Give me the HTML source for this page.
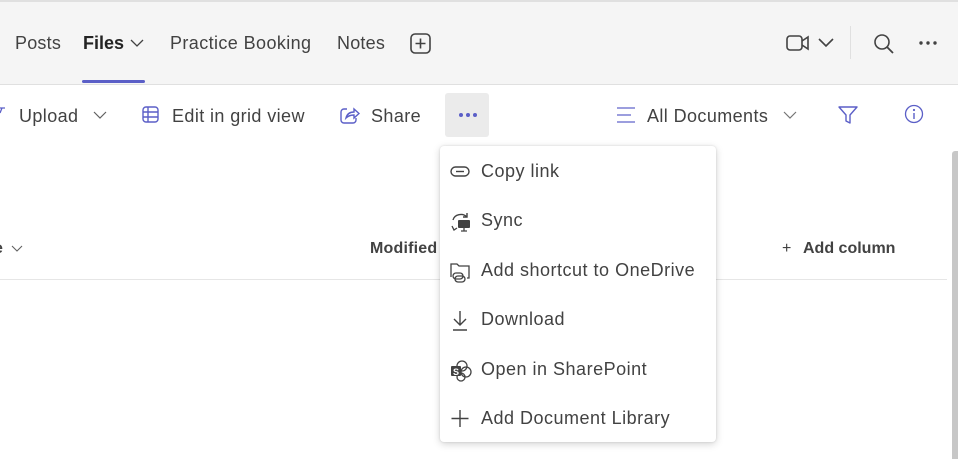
<!DOCTYPE html>
<html><head><meta charset="utf-8"><style>
*{margin:0;padding:0;box-sizing:border-box}
body{width:958px;height:459px;overflow:hidden;background:#fff;font-family:"Liberation Sans",sans-serif;color:#242424;position:relative}
.hdr{position:absolute;left:0;top:0;width:958px;height:85px;background:#f5f5f5;border-top:2px solid #e0e0e0;border-bottom:1px solid #e0e0e0}
.t{position:absolute;white-space:nowrap}
.tab{top:33px;font-size:18px;color:#424242;letter-spacing:.2px}
.tb{font-size:18px;color:#424242;letter-spacing:.4px}
.mi{position:absolute;left:440px;width:276px;height:49px;font-size:18px;color:#424242;letter-spacing:.5px}
.mi span{position:absolute;left:41px;top:14px}
.mi svg{position:absolute;left:10px;top:15px}
</style></head><body>
<div class="hdr"></div>
<div class="t tab" style="left:15px">Posts</div>
<div class="t tab" style="left:83px;font-weight:bold;color:#242424;letter-spacing:0">Files</div>
<svg class="t" style="left:130px;top:38px" width="14" height="10"><path d="M1 2l6 6 6-6" fill="none" stroke="#424242" stroke-width="1.3"/></svg>
<div style="position:absolute;left:82px;top:80px;width:63px;height:3px;background:#5b5fc7;border-radius:2px"></div>
<div class="t tab" style="left:170px;letter-spacing:.4px">Practice Booking</div>
<div class="t tab" style="left:337px">Notes</div>
<svg class="t" style="left:410px;top:33px" width="21" height="21"><rect x="1" y="1" width="19" height="19" rx="4" fill="none" stroke="#424242" stroke-width="1.6"/><path d="M10.5 5.5v10M5.5 10.5h10" stroke="#424242" stroke-width="1.6"/></svg>
<svg class="t" style="left:786px;top:34px" width="24" height="18"><rect x="1" y="2" width="15" height="14" rx="3" fill="none" stroke="#424242" stroke-width="1.6"/><path d="M16 7l6-4v12l-6-4" fill="none" stroke="#424242" stroke-width="1.6"/></svg>
<svg class="t" style="left:818px;top:38px" width="16" height="10"><path d="M1 1l7 7 7-7" fill="none" stroke="#424242" stroke-width="1.6"/></svg>
<div style="position:absolute;left:850px;top:26px;width:1px;height:33px;background:#e0e0e0"></div>
<svg class="t" style="left:873px;top:33px" width="22" height="22"><circle cx="9" cy="9" r="7" fill="none" stroke="#424242" stroke-width="1.6"/><path d="M14 14l6 6" stroke="#424242" stroke-width="1.8"/></svg>
<svg class="t" style="left:918px;top:40px" width="20" height="6"><circle cx="3" cy="3" r="1.7" fill="#424242"/><circle cx="10" cy="3" r="1.7" fill="#424242"/><circle cx="17" cy="3" r="1.7" fill="#424242"/></svg>

<svg class="t" style="left:0;top:106px" width="8" height="10"><path d="M0 2h5M2 2l-2 5" stroke="#5b5fc7" stroke-width="1.3" fill="none"/></svg>
<div class="t tb" style="left:19px;top:106px">Upload</div>
<svg class="t" style="left:93px;top:111px" width="14" height="9"><path d="M1 1l6 6 6-6" fill="none" stroke="#616161" stroke-width="1.2"/></svg>
<svg class="t" style="left:142px;top:106px" width="18" height="18"><rect x="1" y="1" width="15" height="15" rx="3" fill="none" stroke="#5b5fc7" stroke-width="1.4"/><path d="M1 6h15M1 11h15M6 1v15" stroke="#5b5fc7" stroke-width="1.4"/></svg>
<div class="t tb" style="left:172px;top:106px">Edit in grid view</div>
<svg class="t" style="left:340px;top:106px" width="20" height="18"><path d="M7 3H4a3 3 0 0 0-3 3v8a3 3 0 0 0 3 3h9a3 3 0 0 0 3-3v-2" fill="none" stroke="#5b5fc7" stroke-width="1.4"/><path d="M6 12c1-4 4-6 8-6V3l5 4.5-5 4.5V9c-3 0-6 1-8 3z" fill="none" stroke="#5b5fc7" stroke-width="1.4"/></svg>
<div class="t tb" style="left:371px;top:106px">Share</div>
<div style="position:absolute;left:445px;top:93px;width:44px;height:44px;background:#ebebeb;border-radius:3px"></div>
<svg class="t" style="left:458px;top:112px" width="20" height="6"><circle cx="3" cy="3" r="2" fill="#5b5fc7"/><circle cx="10" cy="3" r="2" fill="#5b5fc7"/><circle cx="17" cy="3" r="2" fill="#5b5fc7"/></svg>
<svg class="t" style="left:616px;top:105px" width="20" height="20"><path d="M1 3h18M1 10h14M1 17h18" stroke="#5b5fc7" stroke-width="1.4" opacity=".8"/></svg>
<div class="t tb" style="left:647px;top:106px">All Documents</div>
<svg class="t" style="left:783px;top:111px" width="14" height="9"><path d="M1 1l6 6 6-6" fill="none" stroke="#757575" stroke-width="1.2"/></svg>
<svg class="t" style="left:838px;top:105px" width="20" height="20"><path d="M1 2h18l-7 8v8l-4-2v-6z" fill="none" stroke="#5b5fc7" stroke-width="1.4" stroke-linejoin="round"/></svg>
<svg class="t" style="left:904px;top:104px" width="20" height="20"><circle cx="10" cy="10" r="8.5" fill="none" stroke="#5b5fc7" stroke-width="1.3"/><circle cx="10" cy="6" r="1.1" fill="#5b5fc7"/><path d="M10 9v6" stroke="#5b5fc7" stroke-width="1.4"/></svg>

<div class="t" style="left:-6px;top:240px;font-size:16px;font-weight:bold;color:#424242">e</div>
<svg class="t" style="left:11px;top:245px" width="12" height="7"><path d="M1 1l5 5 5-5" fill="none" stroke="#616161" stroke-width="1.1"/></svg>
<div class="t" style="left:370px;top:240px;font-size:16px;font-weight:bold;color:#424242;letter-spacing:.2px">Modified</div>
<div class="t" style="left:782px;top:240px;font-size:16px;color:#424242">+</div>
<div class="t" style="left:803px;top:240px;font-size:16px;font-weight:bold;color:#424242">Add column</div>
<div style="position:absolute;left:0;top:279px;width:947px;height:1px;background:#e6e6e6"></div>
<div style="position:absolute;left:952px;top:151px;width:6px;height:308px;background:#c7c7c7;border-radius:3px 0 0 0"></div>

<div style="position:absolute;left:440px;top:146px;width:276px;height:296px;background:#fff;border-radius:4px;box-shadow:0 2px 8px rgba(0,0,0,.18),0 0 2px rgba(0,0,0,.12)"></div>
<div class="mi" style="top:147px"><svg width="20" height="20"><rect x="1" y="5" width="18" height="9" rx="4.5" fill="none" stroke="#424242" stroke-width="1.4"/><path d="M6 9.5h8" stroke="#424242" stroke-width="1.4"/></svg><span>Copy link</span></div>
<div class="mi" style="top:196px"><svg width="22" height="22"><path d="M3 9a8 7 0 0 1 14-3" fill="none" stroke="#424242" stroke-width="1.4"/><path d="M17 2v4h-4" fill="none" stroke="#424242" stroke-width="1.4"/><rect x="8" y="9" width="12" height="8" rx="1" fill="#424242"/><path d="M14 17v3M11 20h6M2 15l2 4 3-2" stroke="#424242" stroke-width="1.3" fill="none"/></svg><span>Sync</span></div>
<div class="mi" style="top:246px"><svg width="22" height="22"><path d="M1 6V3h6l2 2h10v12h-2M1 6v10" fill="none" stroke="#424242" stroke-width="1.3"/><rect x="3" y="12" width="10" height="6" rx="3" fill="none" stroke="#424242" stroke-width="1.3"/><rect x="5" y="15" width="10" height="6" rx="3" fill="none" stroke="#424242" stroke-width="1.3"/></svg><span>Add shortcut to OneDrive</span></div>
<div class="mi" style="top:295px"><svg width="20" height="22"><path d="M10 1v14M4 9l6 6 6-6M3 20h14" fill="none" stroke="#424242" stroke-width="1.4"/></svg><span>Download</span></div>
<div class="mi" style="top:345px"><svg width="22" height="22"><circle cx="12" cy="6" r="5" fill="none" stroke="#424242" stroke-width="1.3"/><circle cx="16" cy="12" r="5" fill="none" stroke="#424242" stroke-width="1.3"/><circle cx="11" cy="17" r="4" fill="none" stroke="#424242" stroke-width="1.3"/><rect x="1" y="6" width="10" height="10" rx="1" fill="#424242"/><text x="3" y="15" font-size="9" font-weight="bold" fill="#fff" font-family="Liberation Sans">S</text></svg><span>Open in SharePoint</span></div>
<div class="mi" style="top:394px"><svg width="20" height="20"><path d="M10 1v17M1.5 9.5h17" stroke="#424242" stroke-width="1.4"/></svg><span>Add Document Library</span></div>
</body></html>
